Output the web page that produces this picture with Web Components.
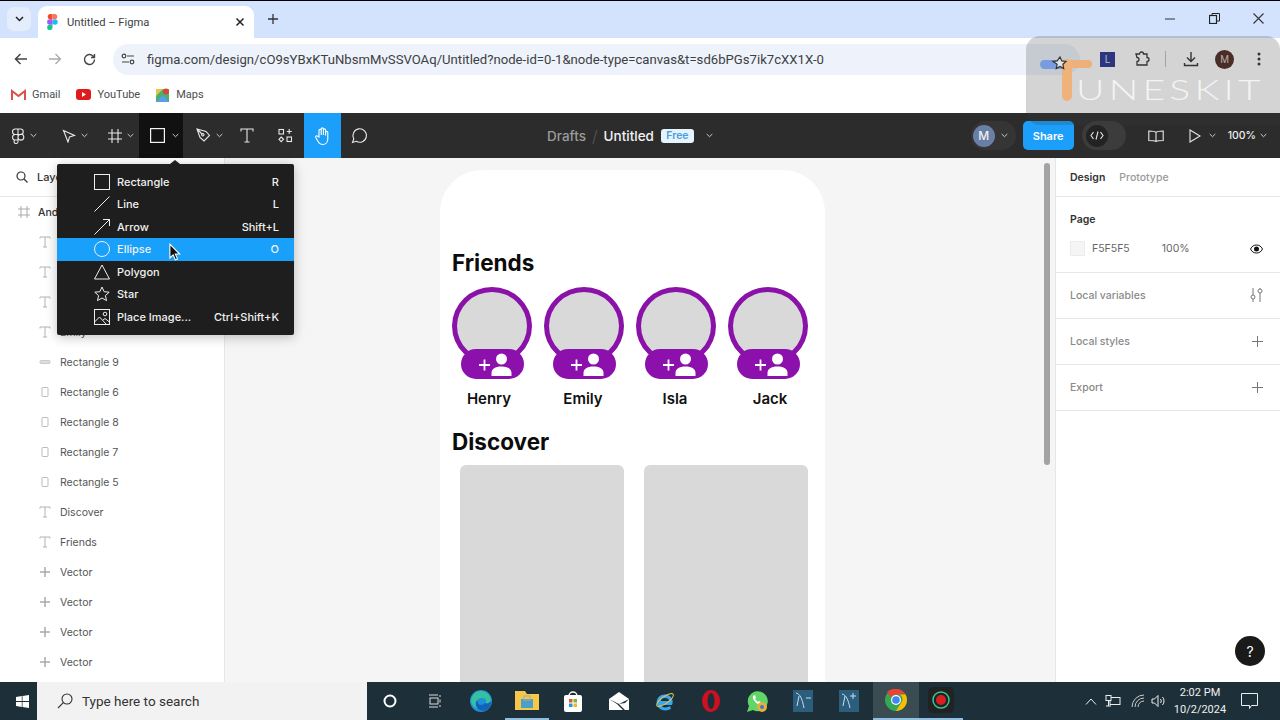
<!DOCTYPE html>
<html lang="en">
<head>
<meta charset="utf-8">
<title>Untitled – Figma</title>
<style>
  html, body { margin: 0; height: 100%; }
  body { width: 1280px; height: 720px; overflow: hidden; position: relative; display: flex; flex-direction: column; font-family: "Inter", "Liberation Sans", sans-serif; background: #fff; }
  .work { display: flex; height: 524px; overflow: hidden; }
</style>
</head>
<body>
  <chrome-tabs></chrome-tabs>
  <chrome-nav></chrome-nav>
  <chrome-bookmarks></chrome-bookmarks>
  <figma-toolbar></figma-toolbar>
  <div class="work">
    <layers-panel></layers-panel>
    <figma-canvas>
      <friend-avatar name="Henry" nudge="-3"></friend-avatar>
      <friend-avatar name="Emily" nudge="-1"></friend-avatar>
      <friend-avatar name="Isla" nudge="-1"></friend-avatar>
      <friend-avatar name="Jack" nudge="2"></friend-avatar>
    </figma-canvas>
    <design-panel></design-panel>
  </div>
  <win-taskbar></win-taskbar>
  <shape-menu></shape-menu>
  <tunes-watermark></tunes-watermark>

<script>
const render = (el, css, html) => {
  el.attachShadow({ mode: 'open' });
  el.shadowRoot.innerHTML = `<style>${css}</style>${html}`;
};
const chev = (c = '#ccc') => `<svg width="7" height="5" viewBox="0 0 7 5"><path d="M.7 1l2.8 2.7L6.300 1" fill="none" stroke="${c}" stroke-width="1"/></svg>`;

class ChromeTabs extends HTMLElement {
  connectedCallback() {
    render(this, `
      :host { display: flex; align-items: flex-end; height: 37px; background: #d3e3fd; border-top: 1px solid #000; flex: none; position: relative; }
      .list { width: 24px; height: 24px; margin: 0 7px 7px 7px; border-radius: 7px; background: #e4edfc; display: flex; align-items: center; justify-content: center; }
      .tab { width: 216px; height: 32px; background: #fff; border-radius: 9px 9px 0 0; display: flex; align-items: center; box-sizing: border-box; padding: 0 9px 0 9px; font: 11.200px "Roboto", "Liberation Sans", sans-serif; color: #3c3f44; }
      .tab span { margin-left: 9px; flex: 1; }
      .new { margin: 0 0 7px 13px; height: 24px; display: flex; align-items: center; }
      .win { margin-left: auto; display: flex; height: 37px; align-items: center; padding-bottom: 0; }
      .win div { width: 44px; display: flex; justify-content: center; margin-bottom: 2px; }
    `, `
      <div class="list"><svg width="9" height="6" viewBox="0 0 9 6"><path d="M1 1l3.500 3.500L8 1" fill="none" stroke="#222" stroke-width="1.500"/></svg></div>
      <div class="tab">
        <svg width="11" height="16" viewBox="0 0 11 16"><circle cx="8" cy="8" r="2.700" fill="#1abcfe"/><path d="M5.500 10.700H2.800a2.700 2.700 0 1 0 2.700 2.700z" fill="#0acf83"/><path d="M5.500 5.300H2.800a2.700 2.700 0 0 0 0 5.400h2.700z" fill="#a259ff"/><path d="M5.500 0H2.800a2.700 2.700 0 0 0 0 5.300h2.700z" fill="#f24e1e"/><path d="M5.500 0h2.700a2.700 2.700 0 0 1 0 5.300H5.500z" fill="#ff7262"/></svg>
        <span>Untitled – Figma</span>
        <svg width="10" height="10" viewBox="0 0 10 10"><path d="M1.500 1.500l7 7M8.500 1.500l-7 7" stroke="#222" stroke-width="1.500"/></svg>
      </div>
      <div class="new"><svg width="12" height="12" viewBox="0 0 12 12"><path d="M6 1v10M1 6h10" stroke="#333" stroke-width="1.300"/></svg></div>
      <div class="win">
        <div><svg width="10" height="10" viewBox="0 0 10 10"><path d="M0 5h10" stroke="#333"/></svg></div>
        <div><svg width="11" height="11" viewBox="0 0 11 11"><rect x=".5" y="2.500" width="7" height="8" fill="none" stroke="#222" stroke-width="1.200"/><path d="M3 2.500V.5h7.500v7.500H8" fill="none" stroke="#222"/></svg></div>
        <div><svg width="11" height="11" viewBox="0 0 11 11"><path d="M.5.5l10 10M10.500.5l-10 10" stroke="#333" stroke-width="1.100"/></svg></div>
      </div>
    `);
  }
}

class ChromeNav extends HTMLElement {
  connectedCallback() {
    render(this, `
      :host { display: flex; align-items: center; height: 42px; background: #fff; flex: none; font: 13.150px "Roboto", "Liberation Sans", sans-serif; color: #3d4043; }
      .btn { width: 34px; display: flex; justify-content: center; flex: none; }
      .nav { display: flex; padding-left: 4px; }
      .url { flex: 1; height: 31px; margin-left: 7px; background: #eef3fb; border-radius: 16px; display: flex; align-items: center; padding-left: 8px; }
      .url svg { margin-right: 12px; flex: none; }
      .tools { display: flex; align-items: center; flex: none; width: 200px; }
      .ext { margin-left: 20px; width: 15px; height: 15px; background: #283593; color: #ddd; font: 10px "Liberation Sans", sans-serif; display: flex; align-items: center; justify-content: center; }
      .m { width: 19px; height: 19px; border-radius: 50%; background: #4e2b22; color: #d8c8c4; font-size: 10px; display: flex; align-items: center; justify-content: center; }
      .sep { width: 1px; height: 16px; background: #b8c4d4; margin: 0 17px 0 15px; }
    `, `
      <div class="nav">
        <div class="btn"><svg width="14" height="12" viewBox="0 0 14 12"><path d="M13 6H2M6.500 1L1.500 6l5 5" fill="none" stroke="#444" stroke-width="1.500"/></svg></div>
        <div class="btn"><svg width="14" height="12" viewBox="0 0 14 12"><path d="M1 6h11M7.500 1l5 5-5 5" fill="none" stroke="#aaa" stroke-width="1.300"/></svg></div>
        <div class="btn"><svg width="13" height="13" viewBox="0 0 13 13"><path d="M11.500 6.500a5 5 0 1 1-1.500-3.600L11.500 4.500M11.500 1v3.500H8" fill="none" stroke="#444" stroke-width="1.400"/></svg></div>
      </div>
      <div class="url">
        <svg width="14" height="12" viewBox="0 0 14 12"><circle cx="3" cy="3" r="1.800" fill="none" stroke="#444" stroke-width="1.200"/><path d="M6 3h7M1 9h7" stroke="#444" stroke-width="1.200"/><circle cx="11" cy="9" r="1.800" fill="none" stroke="#444" stroke-width="1.200"/></svg>
        <span>figma.com/design/cO9sYBxKTuNbsmMvSSVOAq/Untitled?node-id=0-1&amp;node-type=canvas&amp;t=sd6bPGs7ik7cXX1X-0</span>
      </div>
      <div class="tools">
        <div class="ext">L</div>
        <svg style="margin-left:19px" width="16" height="16" viewBox="0 0 16 16"><path d="M2 3h3.500a2 2 0 0 1 4 0H13v3.500a2 2 0 0 1 0 4V14H3v-3.500a2 2 0 0 0 0-4z" fill="none" stroke="#333" stroke-width="1.300"/></svg>
        <div class="sep"></div>
        <svg width="16" height="16" viewBox="0 0 16 16"><path d="M8 1v9M4 6.500L8 10.500l4-4M1.500 12v2.500h13V12" fill="none" stroke="#333" stroke-width="1.400"/></svg>
        <div class="m" style="margin-left:16px">M</div>
        <svg style="margin-left:23px" width="4" height="14" viewBox="0 0 4 14"><circle cx="2" cy="2" r="1.500" fill="#333"/><circle cx="2" cy="7" r="1.500" fill="#333"/><circle cx="2" cy="12" r="1.500" fill="#333"/></svg>
      </div>
    `);
  }
}

class ChromeBookmarks extends HTMLElement {
  connectedCallback() {
    render(this, `
      :host { display: flex; align-items: center; height: 33px; background: #fff; flex: none; padding: 0 0 4px 11px; gap: 16px; font: 11px "Roboto", "Liberation Sans", sans-serif; color: #4a4d51; box-sizing: border-box; }
      div { display: flex; align-items: center; gap: 6px; }
    `, `
      <div><svg width="15" height="12" viewBox="0 0 15 12"><path d="M1 11V2l6.500 5L14 2v9" fill="none" stroke="#d9524a" stroke-width="2"/></svg>Gmail</div>
      <div><svg width="15" height="11" viewBox="0 0 15 11"><rect width="15" height="11" rx="3" fill="#e01b1b"/><path d="M6 3l4 2.500L6 8z" fill="#fff"/></svg>YouTube</div>
      <div><svg width="14" height="14" viewBox="0 0 14 14"><rect y="1" width="13" height="13" fill="#4caf6a"/><path d="M0 14L7 7l6 7z" fill="#5a9cf0"/><path d="M0 1h7L0 8z" fill="#e8c34a"/><circle cx="10" cy="3.500" r="3" fill="#d9453a"/></svg>Maps</div>
    `);
  }
}

class FigmaToolbar extends HTMLElement {
  connectedCallback() {
    const s = 'fill="none" stroke="#e8e8e8" stroke-width="1.100"';
    render(this, `
      :host { display: flex; align-items: center; height: 45px; background: #2c2c2c; flex: none; font: 500 12px "Inter", sans-serif; color: #eee; }
      .t { height: 45px; display: flex; align-items: center; justify-content: center; gap: 5px; box-sizing: border-box; flex: none; }
      .shape { background: #111; gap: 7px; padding-left: 7px; }
      .hand { background: #1b9ffa; }
      .title { display: flex; align-items: center; margin-left: 169px; font-size: 13.500px; color: #f2f2f2; }
      .drafts { color: #9b9b9b; }
      .slash { color: #555; margin: 0 6px; font-weight: 300; font-size: 16px; }
      .free { margin-left: 7px; width: 33px; height: 14px; border-radius: 3px; background: #e5f3fd; color: #4a9edb; font-size: 10.500px; font-weight: 600; display: flex; align-items: center; justify-content: center; }
      .title svg { margin-left: 12px; }
      .right { margin-left: auto; display: flex; align-items: center; }
      .who { width: 45px; height: 29px; border-radius: 15px; background: #353535; display: flex; align-items: center; gap: 6px; padding-left: 2px; box-sizing: border-box; }
      .av { width: 22px; height: 22px; border-radius: 50%; background: #6a7fa6; color: #f0f0f0; font-size: 12px; display: flex; align-items: center; justify-content: center; }
      .share { margin-left: 7px; width: 51px; height: 29px; border-radius: 5px; background: #1b9ffa; color: #fff; font-size: 11px; font-weight: 600; display: flex; align-items: center; justify-content: center; }
      .code { margin-left: 8px; width: 44px; height: 29px; border-radius: 15px; background: #3c3c3c; display: flex; align-items: center; padding-left: 4px; box-sizing: border-box; }
      .code div { width: 22px; height: 22px; border-radius: 50%; background: #232323; display: flex; align-items: center; justify-content: center; }
      .book { margin-left: 22px; }
      .play { margin-left: 25px; }
      .zoom { margin-left: 12px; display: flex; align-items: center; gap: 4px; margin-right: 13px; font-size: 10.500px; }
    `, `
      <div class="t" style="width:47px"><svg width="14" height="16" viewBox="0 0 14 16"><path d="M7 1H3.800a2.800 2.800 0 0 0 0 5.500H7zM7 1h3a2.800 2.800 0 0 1 0 5.500H7zM7 6.500H3.800a2.800 2.800 0 0 0 0 5.500H7zM7 6.500V12 M12.800 9.200a2.800 2.800 0 1 1-5.800 0 2.800 2.800 0 0 1 5.800 0zM7 12H3.800A2 2 0 1 0 7 14z" ${s}/></svg>${chev()}</div>
      <div class="t" style="width:55px"><svg width="14" height="14" viewBox="0 0 14 14"><path d="M1.500 1.500l11 5-5 1.500-1.500 5z" ${s}/></svg>${chev()}</div>
      <div class="t" style="width:37px"><svg width="14" height="14" viewBox="0 0 14 14"><path d="M4 0v14M10 0v14M0 4h14M0 10h14" ${s}/></svg>${chev()}</div>
      <div class="t shape" style="width:44px"><svg width="15" height="15" viewBox="0 0 15 15"><rect x=".6" y=".6" width="13.800" height="13.800" fill="none" stroke="#f4f4f4" stroke-width="1.200"/></svg>${chev()}</div>
      <div class="t" style="width:45px;padding-left:8px"><svg width="15" height="15" viewBox="0 0 15 15"><path d="M1 1l9 2.500 3.500 4-5.500 5.500-4-3.500zM1 1l5 5" ${s}/><circle cx="6.800" cy="6.800" r="1.200" ${s}/></svg>${chev()}</div>
      <div class="t" style="width:38px"><svg width="14" height="15" viewBox="0 0 14 15"><path d="M1 3.500V1h12v2.500M7 1v13M4.500 14h5" ${s}/></svg></div>
      <div class="t" style="width:38px"><svg width="15" height="15" viewBox="0 0 15 15"><rect x="1" y="1.500" width="4.500" height="4.500" ${s}/><rect x="9" y="9" width="4.500" height="4.500" ${s}/><path d="M3.200 9l2.300 2.300-2.300 2.300L1 11.300zM11.200 1v5M8.800 3.500h5" ${s}/></svg></div>
      <div class="t hand" style="width:37px"><svg width="18" height="20" viewBox="0 0 18 20"><path d="M5 11V4.500a1.100 1.100 0 0 1 2.200 0V9 3a1.100 1.100 0 0 1 2.200 0v6-5a1.100 1.100 0 0 1 2.200 0v5.500-3a1.100 1.100 0 0 1 2.200 0V13c0 3-2 5.500-5 5.500-2.800 0-3.800-1.200-5-3.500l-2-3.500c-.8-1.500 1-2.300 2-1.200z" fill="none" stroke="#fff" stroke-width="1.100"/></svg></div>
      <div class="t" style="width:37px"><svg width="17" height="17" viewBox="0 0 17 17"><path d="M1.500 15.500l1.300-3.800a6.700 6.700 0 1 1 2.500 2.600z" ${s}/></svg></div>
      <div class="title"><span class="drafts">Drafts</span><span class="slash">/</span><span>Untitled</span><span class="free">Free</span>${chev()}</div>
      <div class="right">
        <div class="who"><div class="av">M</div>${chev()}</div>
        <div class="share">Share</div>
        <div class="code"><div><svg width="14" height="9" viewBox="0 0 14 9"><path d="M3.500 1L1 4.500 3.500 8M10.500 1L13 4.500 10.500 8M8 .5L6 8.500" ${s}/></svg></div></div>
        <svg class="book" width="16" height="12" viewBox="0 0 16 12"><path d="M8 2.500C7 1 5 1 .8 1v9.500c4 0 6 0 7.200 1 1.200-1 3.200-1 7.200-1V1C11 1 9 1 8 2.500zM8 2.500v9" ${s}/></svg>
        <svg class="play" width="12" height="14" viewBox="0 0 12 14"><path d="M1 1l10 6-10 6z" ${s}/></svg>
        <span style="margin-left:8px;display:flex">${chev()}</span>
        <div class="zoom"><span>100%</span>${chev()}</div>
      </div>
    `);
  }
}

class LayerRow extends HTMLElement {
  connectedCallback() {
    const icons = {
      frame: '<path d="M4 1v12M10 1v12M1 4h12M1 10h12" fill="none" stroke="#aaa"/>',
      text: '<path d="M2 3.500V2h10v1.500M7 2v10M5 12h4" fill="none" stroke="#aaa" stroke-width=".9"/>',
      bar: '<rect x="2" y="5.500" width="10" height="3" rx="1" fill="#ddd" stroke="#bbb" stroke-width=".7"/>',
      rect: '<rect x="4" y="2.500" width="6" height="9" rx="1" fill="none" stroke="#bbb"/>',
      vector: '<path d="M7 2v10M2 7h10" stroke="#aaa" stroke-width="1.500"/>'
    };
    const top = this.hasAttribute('top');
    render(this, `
      :host { display: flex; align-items: center; height: 30px; padding-left: ${top ? 17 : 38}px; font: 10.500px "Inter", sans-serif; color: ${top ? '#333' : '#555'}; ${top ? 'font-weight:500;' : ''} }
      svg { margin-right: ${top ? 7 : 8}px; flex: none; }
    `, `<svg width="14" height="14" viewBox="0 0 14 14">${icons[this.getAttribute('icon')]}</svg><slot></slot>`);
  }
}

class LayersPanel extends HTMLElement {
  connectedCallback() {
    render(this, `
      :host { display: block; width: 225px; flex: none; box-sizing: border-box; background: #fff; border-right: 1px solid #e6e6e6; }
      .head { height: 38px; border-bottom: 1px solid #e6e6e6; display: flex; align-items: center; padding-left: 16px; gap: 9px; font: 500 11px "Inter", sans-serif; color: #333; }
    `, `
      <div class="head"><svg width="12" height="12" viewBox="0 0 12 12"><circle cx="5" cy="5" r="4" fill="none" stroke="#333" stroke-width="1.200"/><path d="M8 8l3.500 3.500" stroke="#333" stroke-width="1.200"/></svg>Layers</div>
      <layer-row top icon="frame">Android</layer-row>
      <layer-row icon="text"></layer-row>
      <layer-row icon="text"></layer-row>
      <layer-row icon="text"></layer-row>
      <layer-row icon="text">Emily</layer-row>
      <layer-row icon="bar">Rectangle 9</layer-row>
      <layer-row icon="rect">Rectangle 6</layer-row>
      <layer-row icon="rect">Rectangle 8</layer-row>
      <layer-row icon="rect">Rectangle 7</layer-row>
      <layer-row icon="rect">Rectangle 5</layer-row>
      <layer-row icon="text">Discover</layer-row>
      <layer-row icon="text">Friends</layer-row>
      <layer-row icon="vector">Vector</layer-row>
      <layer-row icon="vector">Vector</layer-row>
      <layer-row icon="vector">Vector</layer-row>
      <layer-row icon="vector">Vector</layer-row>
    `);
  }
}

class FriendAvatar extends HTMLElement {
  connectedCallback() {
    render(this, `
      :host { display: block; width: 80px; font: 600 15px "Inter", sans-serif; color: #111; }
      .pic { width: 80px; height: 92px; position: relative; }
      .ring { width: 80px; height: 78px; box-sizing: border-box; border-radius: 50%; border: 5px solid #8a12a8; background: #d9d9d9; }
      .pill { position: absolute; left: 9px; top: 62px; width: 63px; height: 30px; box-sizing: border-box; padding-left: 4px; border-radius: 15px; background: #8c10ac; display: flex; align-items: center; justify-content: center; }
      .name { text-align: center; margin-top: 11px; margin-left: ${2 * (this.getAttribute('nudge') || 0)}px; line-height: 18px; }
    `, `
      <div class="pic">
        <div class="ring"></div>
        <div class="pill"><svg width="36" height="26" viewBox="0 0 36 26"><path d="M2 14h11M7.500 8.500v11" stroke="#fff" stroke-width="1.800"/><circle cx="24.500" cy="8" r="5.500" fill="#fff"/><path d="M14.500 25v-3c0-4 3.500-6.500 10-6.500s10 2.500 10 6.500v3z" fill="#fff"/></svg></div>
      </div>
      <div class="name">${this.getAttribute('name')}</div>
    `);
  }
}

class FigmaCanvas extends HTMLElement {
  connectedCallback() {
    render(this, `
      :host { display: block; width: 830px; flex: none; background: #f5f5f5; position: relative; overflow: hidden; box-sizing: border-box; padding: 12px 0 0 215px; }
      .frame { width: 385px; height: 700px; background: #fff; border-radius: 42px 42px 0 0; box-sizing: border-box; padding: 75px 18px 0 12px; }
      h2 { margin: 0; font: 700 22.500px/36px "Inter", sans-serif; color: #0c0c0c; }
      .row { display: flex; gap: 12px; margin-top: 6px; }
      .disc { margin-top: 16px; }
      .cards { display: grid; grid-template-columns: 164px 164px; gap: 20px; margin: 5px 0 0 8px; }
      .card { height: 400px; background: #d9d9d9; border-radius: 6px; }
      .bar { position: absolute; left: 819px; top: 5px; width: 6px; height: 302px; background: #a3a3a3; border-radius: 3px; }
    `, `
      <div class="frame">
        <h2>Friends</h2>
        <div class="row"><slot></slot></div>
        <h2 class="disc">Discover</h2>
        <div class="cards"><div class="card"></div><div class="card"></div></div>
      </div>
      <div class="bar"></div>
    `);
  }
}

class DesignPanel extends HTMLElement {
  connectedCallback() {
    render(this, `
      :host { display: block; flex: 1; background: #fff; border-left: 1px solid #e6e6e6; font: 10.500px "Inter", sans-serif; color: #333; position: relative; }
      section { border-bottom: 1px solid #e6e6e6; height: 46px; box-sizing: border-box; padding: 0 17px 1px 14px; display: flex; align-items: center; justify-content: space-between; color: #8a8a8a; font-weight: 500; }
      .tabs { height: 39px; gap: 14px; justify-content: flex-start; padding-bottom: 0; }
      .tabs b { font-weight: 600; color: #333; }
      .tabs span { color: #999; }
      .page { height: 76px; display: block; padding-top: 16px; color: #333; }
      .page b { font-weight: 600; }
      .fill { display: flex; align-items: center; margin-top: 15px; color: #666; font-weight: 400; }
      .sw { width: 15px; height: 15px; background: #f5f5f5; border: 1px solid #ececec; box-sizing: border-box; margin-right: 7px; }
      .fill svg { margin-left: auto; }
      .help { position: absolute; left: 179px; top: 478px; width: 30px; height: 30px; border-radius: 50%; background: #1a1a1a; color: #fff; font-size: 14px; font-weight: 400; display: flex; align-items: center; justify-content: center; }
    `, `
      <section class="tabs"><b>Design</b><span>Prototype</span></section>
      <section class="page"><b>Page</b>
        <div class="fill"><div class="sw"></div><span>F5F5F5</span><span style="margin-left:32px">100%</span>
          <svg width="13" height="10" viewBox="0 0 13 10"><path d="M.5 5C2 2 4 1 6.500 1S11 2 12.500 5C11 8 9 9 6.500 9S2 8 .5 5z" fill="none" stroke="#111"/><circle cx="6.500" cy="5" r="2.500" fill="#111"/></svg></div>
      </section>
      <section>Local variables<svg width="13" height="16" viewBox="0 0 13 16"><path d="M3 1v7M3 12v3M10 1v1M10 6v9" stroke="#777"/><circle cx="3" cy="10" r="2" fill="none" stroke="#777"/><circle cx="10" cy="4" r="2" fill="none" stroke="#777"/></svg></section>
      <section>Local styles<svg width="11" height="11" viewBox="0 0 11 11"><path d="M5.500 0v11M0 5.500h11" stroke="#777"/></svg></section>
      <section>Export<svg width="11" height="11" viewBox="0 0 11 11"><path d="M5.500 0v11M0 5.500h11" stroke="#777"/></svg></section>
      <div class="help">?</div>
    `);
  }
}

class MenuItem extends HTMLElement {
  connectedCallback() {
    render(this, `
      :host { display: flex; align-items: center; height: 22.500px; padding: 0 15px 0 37px; color: #f0f0f0; }
      :host([active]) { background: #18a0fb; }
      svg { margin-right: 7px; flex: none; }
      span { margin-left: auto; }
    `, `<svg width="16" height="16" viewBox="0 0 16 16" fill="none" stroke="#eee" stroke-width="1">${this.getAttribute('icon')}</svg><slot></slot><span>${this.getAttribute('key') || ''}</span>`);
  }
}

class ShapeMenu extends HTMLElement {
  connectedCallback() {
    render(this, `
      :host { position: absolute; left: 57px; top: 164px; width: 237px; height: 171px; box-sizing: border-box; padding-top: 6.500px; background: #1e1e1e; border-radius: 2px; box-shadow: 0 2px 12px rgba(0,0,0,.25); font: 500 11px "Inter", sans-serif; }
      .tip { position: absolute; left: 113px; top: -4px; border: 5px solid transparent; border-top: 0; border-bottom: 4px solid #1e1e1e; }
      .cursor { position: absolute; left: 112px; top: 79px; }
    `, `
      <div class="tip"></div>
      <menu-item icon='<rect x=".5" y=".5" width="15" height="15"/>' key="R">Rectangle</menu-item>
      <menu-item icon='<path d="M.5 15.500l15-15"/>' key="L">Line</menu-item>
      <menu-item icon='<path d="M.5 15.500l15-15M9 .5h6.500V7"/>' key="Shift+L">Arrow</menu-item>
      <menu-item active icon='<circle cx="8" cy="8" r="7.500"/>' key="O">Ellipse</menu-item>
      <menu-item icon='<path d="M8 1l7.500 14H.5z"/>' key="">Polygon</menu-item>
      <menu-item icon='<path d="M8 1l2.100 4.700 5.100.5-3.800 3.400 1.100 5L8 12l-4.500 2.600 1.100-5L.8 6.200l5.100-.5z"/>' key="">Star</menu-item>
      <menu-item icon='<rect x=".5" y=".5" width="15" height="15"/><path d="M.5 13l5-5 7 7.500M9 11l2-1.500 4.500 3.500"/><circle cx="11" cy="5" r="1.800"/>' key="Ctrl+Shift+K">Place Image...</menu-item>
      <svg class="cursor" width="12" height="18" viewBox="0 0 11 16"><path d="M.8.8v12.600l3-2.800 2 4.600 2-.9-2-4.400h4z" fill="#111" stroke="#fff" stroke-width="1"/></svg>
    `);
  }
}

class TunesWatermark extends HTMLElement {
  connectedCallback() {
    render(this, `
      :host { position: absolute; left: 1026px; top: 36px; width: 254px; height: 89px; border-radius: 14px 14px 0 14px; background: rgba(60,60,60,.22); pointer-events: none; }
      .txt { position: absolute; left: 50px; top: 42px; font: 300 27px/24px "Lato", sans-serif; letter-spacing: 2.900px; color: rgba(255,255,255,.75); transform-origin: left; transform: scaleX(1.450); }
      svg { position: absolute; left: 12px; top: 20px; }
    `, `
      <svg width="72" height="50" viewBox="0 0 72 50"><rect x="2" y="4" width="26" height="9" rx="4.500" fill="#7b9be0"/><path d="M24 8h26" stroke="#eeb07a" stroke-width="8" stroke-linecap="round"/><path d="M29 8v32" stroke="#efb27a" stroke-width="10" stroke-linecap="round"/><path d="M22 1l1.800 3.900 4.200.5-3.100 2.900.8 4.200-3.700-2.100-3.700 2.100.8-4.200L15 5.400l4.200-.5z" fill="#dfe3ea" stroke="#333" stroke-width="1.200"/></svg>
      <div class="txt">UNESKIT</div>
    `);
  }
}

class WinTaskbar extends HTMLElement {
  connectedCallback() {
    const app = (w, html, cls = '') => `<div class="app ${cls}" style="width:${w}px">${html}</div>`;
    render(this, `
      :host { display: flex; align-items: center; height: 38px; background: #1d2f38; flex: none; color: #f0f0f0; position: relative; }
      .start { width: 37px; display: flex; justify-content: center; padding-left: 7px; box-sizing: border-box; }
      .search { width: 330px; height: 38px; background: #f2f2f2; display: flex; align-items: center; box-sizing: border-box; padding-left: 20px; gap: 9px; font: 13.500px "Roboto", "Liberation Sans", sans-serif; color: #333; }
      .app { height: 38px; display: flex; align-items: center; justify-content: center; flex: none; box-sizing: border-box; }
      .on { border-bottom: 2px solid #8fbfe0; }
      .active { background: #3b4b52; }
      .tray { margin-left: auto; display: flex; align-items: center; }
      .time { font: 11px/17px "Roboto", "Liberation Sans", sans-serif; text-align: center; width: 62px; margin-left: 3px; }
    `, `
      <div class="start"><svg width="13" height="13" viewBox="0 0 13 13" fill="#fff"><path d="M0 2l5.800-.9v5H0zM6.500 1L13 0v6.100H6.500zM0 6.900h5.800v5L0 11zM6.500 6.900H13V13l-6.500-1z"/></svg></div>
      <div class="search"><svg width="16" height="16" viewBox="0 0 16 16"><circle cx="10" cy="6" r="5" fill="none" stroke="#333" stroke-width="1.100"/><path d="M6.300 9.700L1 15" stroke="#333" stroke-width="1.100"/></svg>Type here to search</div>
      ${app(46, '<svg width="14" height="14"><circle cx="7" cy="7" r="5.500" fill="none" stroke="#fff" stroke-width="2"/></svg>')}
      ${app(44, '<svg width="14" height="14" viewBox="0 0 14 14" fill="none" stroke="#ddd"><path d="M1 1h9M1 13h9M12 1v2M12 5.500v3M12 11v2"/><rect x="2" y="4" width="8" height="6"/></svg>')}
      ${app(48, '<svg width="24" height="24" viewBox="0 0 24 24"><circle cx="12" cy="12" r="11" fill="#1f8fdc"/><path d="M2 13a10 10 0 0 1 20-2c0 3-4 4-6 3 2-1 2-5-3-5-6 0-8 5-4 11a11 11 0 0 1-7-7z" fill="#35c1a0"/><path d="M16 14c2 1 6 0 6-3a11 11 0 0 1-4 10 9 9 0 0 1-9-1c-3-3-3-8 0-8-1 3 3 6 7 2z" fill="#1563b8"/></svg>')}
      ${app(44, '<svg width="24" height="20" viewBox="0 0 24 20"><path d="M0 1h10l2 3h12v16H0z" fill="#f5c84a"/><rect x="6" y="9" width="12" height="9" fill="#4aa0c8"/><rect x="9" y="6" width="6" height="4" fill="none" stroke="#aaa"/></svg>', 'on')}
      ${app(48, '<svg width="18" height="22" viewBox="0 0 18 22"><path d="M5 6a4 4 0 0 1 8 0" fill="none" stroke="#fff" stroke-width="1.500"/><rect y="5" width="18" height="17" rx="2" fill="#fff"/><path d="M5 9h3.500v3.500H5z" fill="#e8562a"/><path d="M9.500 9H13v3.500H9.500z" fill="#7cb82a"/><path d="M5 13.500h3.500V17H5z" fill="#1f9ae0"/><path d="M9.500 13.500H13V17H9.500z" fill="#f5b82a"/></svg>')}
      ${app(44, '<svg width="20" height="18" viewBox="0 0 20 18"><path d="M0 7l10-7 10 7v11H0z" fill="#fff"/><path d="M0 7l10 5 10-5-4 4-6 1 6 6H14L8 12z" fill="#1d2f38"/></svg>')}
      ${app(48, '<svg width="20" height="24" viewBox="0 0 20 24"><path d="M2 15a8 7.500 0 1 1 15 1H6c1 3 6 3 9 1l1 3c-6 3-13 1-14-5zm4-3h8a4 3 0 0 0-8 0z" fill="#3ba7e8"/><ellipse cx="10" cy="11" rx="10" ry="3.500" fill="none" stroke="#ecc94b" stroke-width="1" transform="rotate(-35 10 11)"/></svg>')}
      ${app(44, '<svg width="18" height="22" viewBox="0 0 18 22"><ellipse cx="9" cy="11" rx="9" ry="11" fill="#cf1020"/><ellipse cx="9" cy="11" rx="3.500" ry="8" fill="#1d2f38"/></svg>')}
      ${app(48, '<svg width="22" height="24" viewBox="0 0 22 24"><path d="M1 23l2-6a10 10 0 1 1 4 4z" fill="#5fd667"/><path d="M7 7c-1 3 3 8 7 9l2-2-3-2-1 1-3-3 1-1-1-3z" fill="#fff"/><circle cx="16" cy="18" r="5" fill="#e6b03a"/><circle cx="16" cy="18" r="2" fill="#3a78e0"/></svg>')}
      ${app(44, '<svg width="20" height="22" viewBox="0 0 20 22"><rect width="20" height="22" fill="#2b5d7d"/><path d="M3 3c4 1 6 5 8 15M6 6l-2 10M13 8h5" fill="none" stroke="#cde" stroke-width="1"/></svg>')}
      ${app(48, '<svg width="20" height="22" viewBox="0 0 20 22"><rect width="20" height="22" fill="#2b5d7d"/><path d="M3 4c4 1 6 5 8 14M6 6l-2 10M14 3v6M11 6h6" fill="none" stroke="#cde" stroke-width="1"/></svg>')}
      ${app(46, '<svg width="22" height="22" viewBox="0 0 22 22"><circle cx="11" cy="11" r="11" fill="#34a853"/><path d="M11 0a11 11 0 0 1 9.500 5.500H11a5.500 5.500 0 0 0-5 3L2 3a11 11 0 0 1 9-3z" fill="#ea4335"/><path d="M20.500 5.500A11 11 0 0 1 11 22l5-8a5.500 5.500 0 0 0-1-8.500z" fill="#fbbc05"/><circle cx="11" cy="11" r="5" fill="#fff"/><circle cx="11" cy="11" r="3.800" fill="#4285f4"/></svg>', 'on active')}
      ${app(44, '<svg width="26" height="26" viewBox="0 0 26 26"><rect width="26" height="26" rx="5" fill="#222"/><circle cx="13" cy="13" r="8" fill="none" stroke="#2fc99a" stroke-width="1.500"/><circle cx="13" cy="13" r="5" fill="#d92020"/></svg>', 'on')}
      <div class="tray">
        <svg width="12" height="7" viewBox="0 0 12 7"><path d="M1 6.500L6 1l5 5.500" fill="none" stroke="#eee"/></svg>
        <svg style="margin-left:8px" width="16" height="12" viewBox="0 0 16 12" fill="none" stroke="#eee"><rect x="5" y="2.500" width="10" height="7"/><rect x="1" y=".5" width="5" height="5" fill="#1d2f38"/><path d="M3.500 6v5M1 11h5"/></svg>
        <svg style="margin-left:10px" width="14" height="14" viewBox="0 0 14 14" fill="none" stroke="#ccc"><path d="M1 13A12 12 0 0 1 13 1M4 13a9 9 0 0 1 9-9M7 13a6 6 0 0 1 6-6"/></svg>
        <svg style="margin-left:6.500px" width="15" height="14" viewBox="0 0 15 14" fill="none" stroke="#eee"><path d="M1 5h2.500L7 1.500v11L3.500 9H1zM9.500 5a3 3 0 0 1 0 4M11.500 3a6 6 0 0 1 0 8"/></svg>
        <div class="time">2:02 PM<br>10/2/2024</div>
        <svg style="margin:0 22px 0 10px" width="17" height="16" viewBox="0 0 17 16" fill="none" stroke="#eee"><path d="M.5.500h16v12h-6l-2 3v-3h-8z"/></svg>
      </div>
    `);
  }
}

customElements.define('chrome-tabs', ChromeTabs);
customElements.define('chrome-nav', ChromeNav);
customElements.define('chrome-bookmarks', ChromeBookmarks);
customElements.define('figma-toolbar', FigmaToolbar);
customElements.define('layer-row', LayerRow);
customElements.define('layers-panel', LayersPanel);
customElements.define('friend-avatar', FriendAvatar);
customElements.define('figma-canvas', FigmaCanvas);
customElements.define('design-panel', DesignPanel);
customElements.define('menu-item', MenuItem);
customElements.define('shape-menu', ShapeMenu);
customElements.define('tunes-watermark', TunesWatermark);
customElements.define('win-taskbar', WinTaskbar);
</script>
</body>
</html>
